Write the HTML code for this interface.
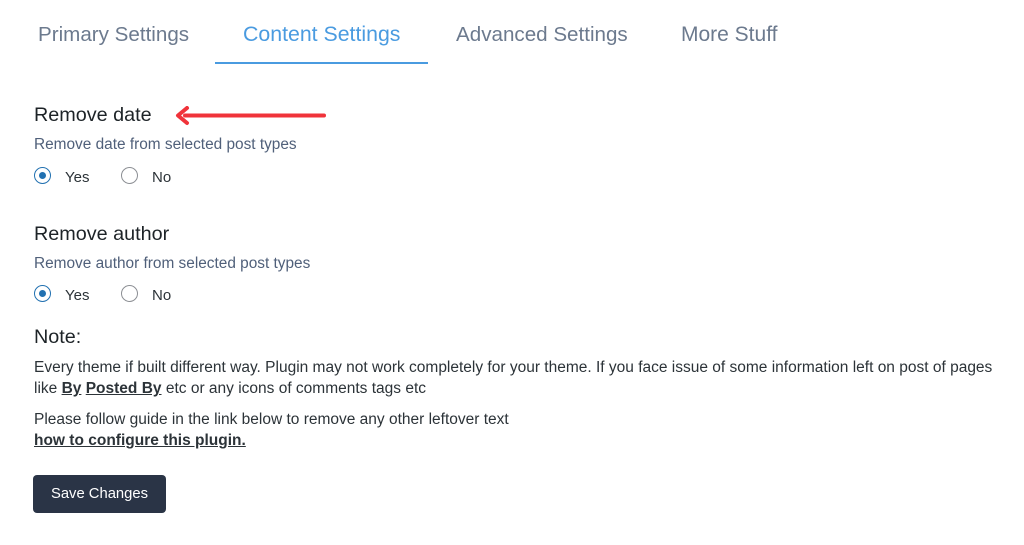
<!DOCTYPE html>
<html><head><style>
body{margin:0;width:1024px;height:545px;background:#fff;font-family:"Liberation Sans",sans-serif;position:relative;overflow:hidden}
.a{position:absolute;white-space:nowrap}
.tab{font-size:20.6px;color:#6c7a8e;top:23px}
.d{font-size:15.4px;color:#50607a}
.r{position:absolute;border:1.5px solid #8c8f94;border-radius:50%;box-sizing:border-box;width:17px;height:17px}
.r.on{border-color:#2271b1}
.r.on::after{content:"";position:absolute;left:3.5px;top:3.5px;width:7px;height:7px;border-radius:50%;background:#2271b1}
.l{font-size:15px;color:#2c3338}
.n{font-size:15.5px;color:#2c3338}
</style></head><body>
<div class="a tab" style="left:38px">Primary Settings</div>
<div class="a tab" style="left:243px;top:22px;font-size:21.3px;color:#4a9be0">Content Settings</div>
<div class="a" style="left:215px;top:62px;width:213px;height:2px;background:#4a9be0"></div>
<div class="a tab" style="left:456px">Advanced Settings</div>
<div class="a tab" style="left:681px;font-size:21px">More Stuff</div>

<div class="a" style="left:34px;top:104px;font-size:19.8px;color:#1d2327">Remove date</div>
<svg class="a" style="left:175px;top:106px" width="152" height="22"><path d="M149 9.5H10" stroke="#f0333a" stroke-width="4" stroke-linecap="round"/><path d="M12 2L3 9.5L12 17" fill="none" stroke="#f0333a" stroke-width="4" stroke-linecap="round" stroke-linejoin="round"/></svg>
<div class="a d" style="left:34px;top:136px">Remove date from selected post types</div>
<div class="r on" style="left:34px;top:167px"></div>
<div class="a l" style="left:65px;top:169px">Yes</div>
<div class="r" style="left:121px;top:167px"></div>
<div class="a l" style="left:152px;top:169px">No</div>

<div class="a" style="left:34px;top:223px;font-size:19.8px;color:#1d2327">Remove author</div>
<div class="a d" style="left:34px;top:255px">Remove author from selected post types</div>
<div class="r on" style="left:34px;top:285px"></div>
<div class="a l" style="left:65px;top:287px">Yes</div>
<div class="r" style="left:121px;top:285px"></div>
<div class="a l" style="left:152px;top:287px">No</div>

<div class="a" style="left:34px;top:326px;font-size:19.8px;color:#1d2327">Note:</div>
<div class="a n" style="left:34px;top:359px">Every theme if built different way. Plugin may not work completely for your theme. If you face issue of some information left on post of pages</div>
<div class="a n" style="left:34px;top:380px">like <b><u>By</u></b> <b><u>Posted By</u></b> etc or any icons of comments tags etc</div>
<div class="a n" style="left:34px;top:411px">Please follow guide in the link below to remove any other leftover text</div>
<div class="a n" style="left:34px;top:432px"><b><u>how to configure this plugin.</u></b></div>

<div class="a" style="left:33px;top:475px;width:133px;height:38px;background:#2a3446;border-radius:4px;color:#fff;font-size:14.8px;line-height:38px;text-align:center">Save Changes</div>
</body></html>
